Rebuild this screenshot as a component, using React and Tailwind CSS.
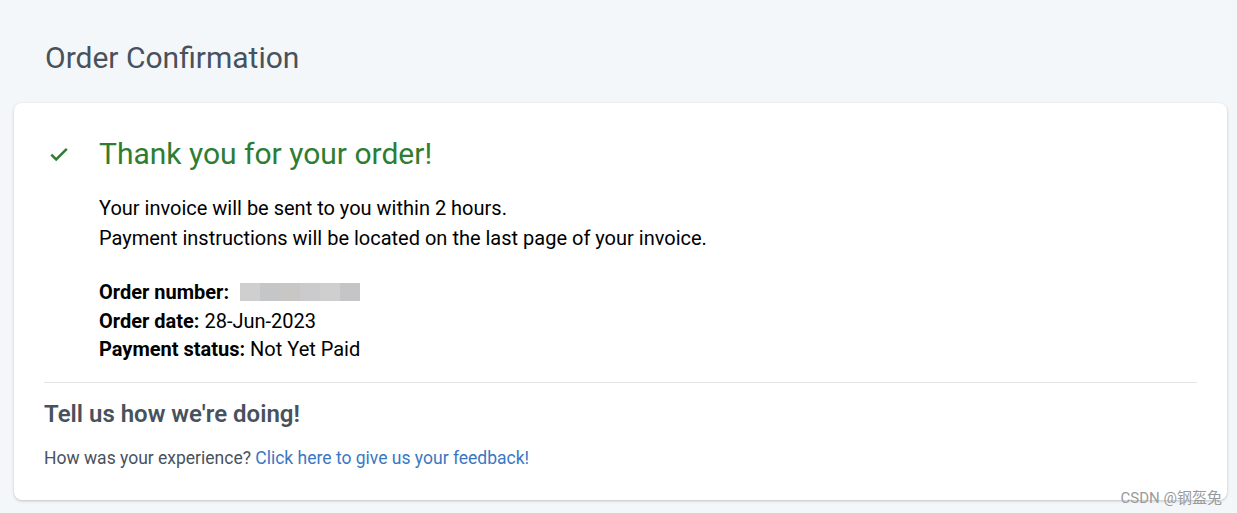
import React from "react";

export default function App() {
  return (
    <div className="relative min-h-[513px] bg-[#f4f7fa] pl-[14px] pr-[10px] pb-[13px]" style={{ fontFamily: "Roboto, 'Noto Sans CJK SC', sans-serif" }}>
      <h1 className="pt-[38px] pl-[31px] text-[30px] leading-[40px] font-normal text-[#47525d]">Order Confirmation</h1>
      <div className="mt-[25px] rounded-lg bg-white px-[30px] pb-[30px] pt-[31px] shadow-[0_1px_3px_rgba(0,0,0,0.22)]">
        <div className="flex items-center">
          <div className="w-[55px] pl-[3px]">
            <svg width="24" height="24" viewBox="0 0 24 24" fill="none" stroke="#2e7d32" strokeWidth="2.5" strokeLinecap="butt" strokeLinejoin="miter">
              <path d="M4.3 12.6L9.2 17.5L19.8 6.9" />
            </svg>
          </div>
          <h2 className="text-[30px] leading-[40px] font-normal text-[#2e7d32]">Thank you for your order!</h2>
        </div>
        <div className="pl-[55px] text-[20px] text-black">
          <div className="mt-[19px] leading-[30px]">
            <p>Your invoice will be sent to you within 2 hours.</p>
            <p>Payment instructions will be located on the last page of your invoice.</p>
          </div>
          <div className="mt-[25px] leading-[28.5px]">
            <p className="flex items-center">
              <span className="font-bold">Order number:</span>
              <span className="ml-[11px] flex h-[18px] items-stretch">
                <span className="w-[20px] bg-[#cfcfcf]" />
                <span className="w-[20px] bg-[#c4c6c8]" />
                <span className="w-[20px] bg-[#c9c7c5]" />
                <span className="w-[20px] bg-[#cbcbcd]" />
                <span className="w-[20px] bg-[#cfcfcf]" />
                <span className="w-[20px] bg-[#c5c5c7]" />
              </span>
            </p>
            <p><span className="font-bold">Order date:</span> 28-Jun-2023</p>
            <p><span className="font-bold">Payment status:</span> Not Yet Paid</p>
          </div>
        </div>
        <div className="mt-[18px] border-t border-[#e2e4e6]" />
        <h3 className="mt-[15px] text-[24px] leading-[32px] font-semibold text-[#47525d]">Tell us how we're doing!</h3>
        <p className="mt-[16px] text-[17.5px] leading-[24px] text-[#47525d]">
          How was your experience? <a href="#" className="text-[#3a77c3]">Click here to give us your feedback!</a>
        </p>
      </div>
      <div className="absolute bottom-[6px] right-[15px] text-[15px] leading-[18px] text-[#9a9a9a]">CSDN @钢盔兔</div>
    </div>
  );
}
